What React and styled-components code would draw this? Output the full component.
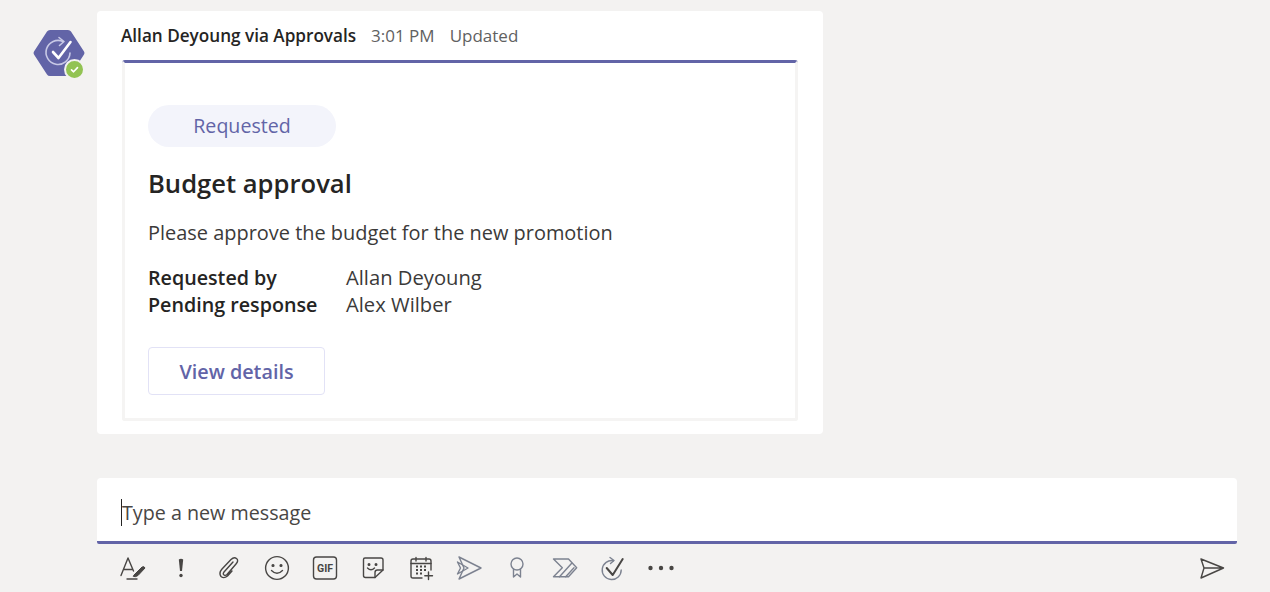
import React from 'react';
import styled, { createGlobalStyle } from 'styled-components';

const Global = createGlobalStyle`
  html, body {
    margin: 0;
    padding: 0;
    height: 100%;
    background: #f3f2f1;
    overflow: hidden;
  }
  body {
    font-family: "Open Sans", "Noto Sans", "Liberation Sans", sans-serif;
    color: #252423;
  }
`;

const Page = styled.div`
  width: 1270px;
  height: 592px;
  padding-top: 11px;
  box-sizing: border-box;
  display: flex;
  flex-direction: column;
`;

const Thread = styled.div`
  display: flex;
  padding-left: 33px;
`;

const AvatarWrap = styled.div`
  position: relative;
  width: 52px;
  height: 46px;
  margin-top: 19px;
  margin-right: 12px;
`;

const StatusDot = styled.div`
  position: absolute;
  left: 31px;
  top: 29px;
  width: 17px;
  height: 17px;
  border-radius: 50%;
  background: #92c353;
  border: 2px solid #f3f2f1;
  display: flex;
  align-items: center;
  justify-content: center;
`;

const Message = styled.div`
  width: 726px;
  height: 423px;
  box-sizing: border-box;
  background: #fff;
  border-radius: 4px;
  padding: 0 25px 0 24px;
`;

const MessageHead = styled.div`
  display: flex;
  align-items: center;
  height: 49px;
  color: #616161;
  white-space: nowrap;
`;

const Sender = styled.span`
  font-size: 17.15px;
  font-weight: 600;
  color: #252423;
  margin-right: 15px;
`;

const Time = styled.span`
  font-size: 17px;
  margin-right: 15px;
`;

const Card = styled.div`
  box-sizing: border-box;
  height: 361px;
  margin-left: 1px;
  border: 3px solid #f5f4f3;
  border-top-color: #6264a7;
  border-radius: 3px;
  padding: 42px 0 0 23px;
`;

const Pill = styled.div`
  width: 188px;
  height: 42px;
  box-sizing: border-box;
  padding-bottom: 1px;
  border-radius: 21px;
  background: #f3f4fb;
  color: #6264a7;
  font-size: 19.6px;
  display: flex;
  align-items: center;
  justify-content: center;
`;

const Title = styled.h2`
  margin: 20px 0 0;
  font-size: 25.6px;
  line-height: 34px;
  font-weight: 600;
  color: #252423;
`;

const Body = styled.p`
  margin: 18px 0 0;
  font-size: 19.95px;
  line-height: 28px;
  color: #3b3a39;
`;

const Facts = styled.div`
  display: grid;
  grid-template-columns: 198px auto;
  grid-auto-rows: 27px;
  margin-top: 17px;
  font-size: 20.2px;
  line-height: 27px;
  color: #3b3a39;
`;

const FactLabel = styled.div`
  font-weight: 600;
  color: #252423;
  font-size: 19.7px;
`;

const DetailsButton = styled.button`
  display: block;
  margin-top: 29px;
  width: 177px;
  height: 48px;
  box-sizing: border-box;
  background: #fff;
  border: 1px solid #e2e2f6;
  border-radius: 4px;
  color: #6264a7;
  font-family: inherit;
  font-size: 19.8px;
  font-weight: 600;
  padding: 0;
`;

const Composer = styled.div`
  margin: 44px 0 0 97px;
  width: 1140px;
`;

const InputBox = styled.div`
  box-sizing: border-box;
  height: 66px;
  background: #fff;
  border-bottom: 3px solid #6264a7;
  border-radius: 4px 4px 2px 2px;
  padding: 21px 0 0 24px;
  display: flex;
  align-items: flex-start;
`;

const Caret = styled.span`
  width: 1px;
  height: 27px;
  background: #252423;
`;

const Placeholder = styled.span`
  font-size: 19.7px;
  line-height: 28px;
  color: #484644;
`;

const Toolbar = styled.div`
  display: flex;
  align-items: center;
  height: 47px;
  padding: 0 12px 0 23px;
`;

const ToolIcon = styled.svg`
  width: 26px;
  height: 26px;
  margin-right: ${(p) => p.$gap}px;
  fill: none;
  stroke: ${(p) => (p.$muted ? '#7c8290' : '#484644')};
  stroke-width: 1.4;
  stroke-linecap: round;
  stroke-linejoin: round;
  flex: none;
`;

const Spacer = styled.div`
  flex: 1;
`;

const Icon = ({ gap = 22, muted, children }) => (
  <ToolIcon viewBox="0 0 26 26" $gap={gap} $muted={muted}>
    {children}
  </ToolIcon>
);

const Avatar = () => (
  <AvatarWrap>
    <svg width="52" height="46" viewBox="0 0 52 46">
      <path d="M14 1.5 Q15 0 17 0 H35 Q37 0 38 1.5 L51 21.5 Q52 23 51 24.5 L38 44.5 Q37 46 35 46 H17 Q15 46 14 44.5 L1 24.5 Q0 23 1 21.5 Z" fill="#6264a7" />
      <path d="M37 23 A12 12 0 1 1 30 11.5" fill="none" stroke="#c8c9e6" strokeWidth="1.6" strokeLinecap="round" />
      <path d="M26 7.5 L31 11.5 L26.5 15.5" fill="none" stroke="#c8c9e6" strokeWidth="1.6" strokeLinecap="round" strokeLinejoin="round" />
      <path d="M20 22 L25.5 28 L37.5 12" fill="none" stroke="#fff" strokeWidth="2.6" strokeLinecap="round" strokeLinejoin="round" />
    </svg>
    <StatusDot>
      <svg width="9" height="9" viewBox="0 0 9 9">
        <path d="M1.5 4.8 L3.6 6.8 L7.5 2.6" fill="none" stroke="#fff" strokeWidth="1.6" strokeLinecap="round" strokeLinejoin="round" />
      </svg>
    </StatusDot>
  </AvatarWrap>
);

export default function App() {
  return (
    <Page>
      <Global />
      <Thread>
        <Avatar />
        <Message>
          <MessageHead>
            <Sender>Allan Deyoung via Approvals</Sender>
            <Time>3:01 PM</Time>
            <Time>Updated</Time>
          </MessageHead>
          <Card>
            <Pill>Requested</Pill>
            <Title>Budget approval</Title>
            <Body>Please approve the budget for the new promotion</Body>
            <Facts>
              <FactLabel>Requested by</FactLabel>
              <div>Allan Deyoung</div>
              <FactLabel>Pending response</FactLabel>
              <div>Alex Wilber</div>
            </Facts>
            <DetailsButton>View details</DetailsButton>
          </Card>
        </Message>
      </Thread>
      <Composer>
        <InputBox>
          <Caret />
          <Placeholder>Type a new message</Placeholder>
        </InputBox>
        <Toolbar>
          {/* format */}
          <Icon>
            <path d="M1 20.5 L8 3 L13.5 16 M3.5 14.5 H12" />
            <path d="M7 24 H17" />
            <path d="M14 20 L22 12 Q24.5 11 25 13 L18 20.5 Q15 22.5 13.5 21.5 Z" fill="#484644" strokeWidth="1" />
          </Icon>
          {/* important */}
          <Icon>
            <path d="M10.8 4.5 Q13 3 15.2 4.5 L14 16 H12 Z" fill="#484644" stroke="none" />
            <circle cx="13" cy="20.5" r="1.7" fill="#484644" stroke="none" />
          </Icon>
          {/* attach */}
          <Icon>
            <path d="M17 7 L8 17 Q6.5 19 8 20 Q9.5 21 11 19.5 L20 9 Q23 5.5 20.5 3.5 Q18 1.5 15 4.5 L6 14 Q2.5 18 5 21.5 Q8 24 11.5 21 L16 16" />
          </Icon>
          {/* emoji */}
          <Icon>
            <circle cx="13" cy="13" r="11.4" />
            <circle cx="9" cy="10.5" r="0.9" fill="#484644" />
            <circle cx="17" cy="10.5" r="0.9" fill="#484644" />
            <path d="M7.5 15.5 Q13 21 18.5 15.5" />
          </Icon>
          {/* gif */}
          <Icon>
            <rect x="1.5" y="2" width="23" height="22" rx="3" />
            <text x="13" y="17" textAnchor="middle" fontFamily="Roboto, sans-serif" fontSize="10.5" fontWeight="700" fill="#484644" stroke="none">GIF</text>
          </Icon>
          {/* sticker */}
          <Icon>
            <path d="M5 3 H21 Q23 3 23 5 V15 L15 22.5 H5.5 Q3.5 22.5 3.5 20.5 V4.5 Q3.5 3 5 3 Z" />
            <path d="M23 15 H17.5 Q15 15 15 17.5 V22.5" />
            <circle cx="9" cy="9.5" r="0.8" fill="#484644" />
            <circle cx="16" cy="9.5" r="0.8" fill="#484644" />
            <path d="M7.5 13 Q11 16.5 14.5 13" />
          </Icon>
          {/* schedule */}
          <Icon>
            <path d="M14 23 H5 Q3 23 3 21 V6 Q3 4 5 4 H21 Q23 4 23 6 V15" />
            <path d="M8 2.5 V6 M18 2.5 V6 M3 8.5 H23" />
            <path d="M8 11.5 H10 M12 11.5 H14 M16 11.5 H18 M8 15 H10 M12 15 H14 M16 15 H18 M8 18.5 H10 M12 18.5 H14" strokeWidth="2.2" strokeLinecap="butt" />
            <path d="M20.5 17 V24.5 M16.8 20.8 H24.5" />
          </Icon>
          {/* stream */}
          <Icon muted>
            <path d="M3 2 L25 13 L3 24 L8 13 Z" />
            <path d="M1.5 7 L12 13 L1.5 19 L4.5 13 Z" />
          </Icon>
          {/* praise */}
          <Icon muted>
            <circle cx="13" cy="9" r="6" />
            <path d="M9.5 14 V22 L13 19 L16.5 22 V14" />
          </Icon>
          {/* power automate */}
          <Icon muted>
            <path d="M1.5 4 H16.5 L24.7 12.7 L16.5 21.7 H1.5 L10.3 12.7 Z" />
            <path d="M7.5 21.7 L19.7 8.3 M13.7 21.7 L22 12.7" />
          </Icon>
          {/* approvals */}
          <Icon muted>
            <path d="M21.2 15 A9.5 9.5 0 1 1 13.5 5.7" />
            <path d="M10 2.5 L14 5.5 L10.5 8.5" />
            <path d="M6.7 13 L12.7 20 L22.7 4" strokeWidth="2" stroke="#484644" />
          </Icon>
          {/* more */}
          <Icon gap={0}>
            <circle cx="2.5" cy="13" r="2.2" fill="#484644" stroke="none" />
            <circle cx="13" cy="13" r="2.2" fill="#484644" stroke="none" />
            <circle cx="23.5" cy="13" r="2.2" fill="#484644" stroke="none" />
          </Icon>
          <Spacer />
          {/* send */}
          <Icon gap={0}>
            <path d="M2 4 L24.5 13 L2 23 L5 13 Z M5 13 H24.5" />
          </Icon>
        </Toolbar>
      </Composer>
    </Page>
  );
}
